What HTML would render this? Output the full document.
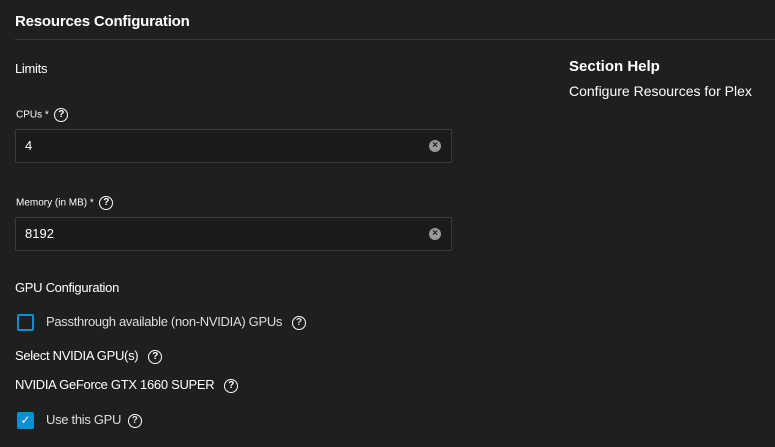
<!DOCTYPE html><html><head><style>
body{margin:0;width:775px;height:447px;background:#1f1f1f;color:#fff;font-family:"Liberation Sans",sans-serif;position:relative;overflow:hidden}
.a{position:absolute;white-space:nowrap}
.q{display:inline-block;width:12px;height:12px;border:1.8px solid #fff;border-radius:50%;font-size:10px;line-height:12px;text-align:center;font-weight:bold;vertical-align:middle;letter-spacing:0}
.in{position:absolute;left:15px;width:435px;height:32px;border:1px solid #3a3a3a;background:#1b1b1b;border-radius:2px}
.in span{position:absolute;left:9px;top:8px;font-size:13px}
.x{position:absolute;right:10px;top:10px;width:12px;height:12px;border-radius:50%;background:#9a9a9a;color:#1b1b1b;font-size:10px;line-height:12px;text-align:center;font-weight:bold}
.cb{position:absolute;width:13px;height:13px;border:2px solid #0a8fd0;border-radius:2px}
.t{font-size:13px;letter-spacing:-0.3px}
</style></head><body>
<div class="a" style="left:15px;top:13px;font-size:15px;font-weight:bold;letter-spacing:-0.2px">Resources Configuration</div>
<div class="a" style="left:15px;top:39px;width:760px;height:1px;background:#3a3a3a"></div>
<div class="a t" style="left:15px;top:61px">Limits</div>
<div class="a" style="left:16px;top:108px;font-size:10px">CPUs * &nbsp;<span class="q">?</span></div>
<div class="in" style="top:129px"><span>4</span><div class="x">×</div></div>
<div class="a" style="left:16px;top:196px;font-size:10px">Memory (in MB) * &nbsp;<span class="q">?</span></div>
<div class="in" style="top:217px"><span>8192</span><div class="x">×</div></div>
<div class="a t" style="left:15px;top:280px">GPU Configuration</div>
<div class="cb" style="left:17px;top:314px"></div>
<div class="a t" style="left:46px;top:314px;color:#ddd">Passthrough available (non-NVIDIA) GPUs &nbsp;&nbsp;<span class="q">?</span></div>
<div class="a t" style="left:15px;top:348px">Select NVIDIA GPU(s) &nbsp;&nbsp;<span class="q">?</span></div>
<div class="a t" style="left:15px;top:377px">NVIDIA GeForce GTX 1660 SUPER &nbsp;&nbsp;<span class="q">?</span></div>
<div class="cb" style="left:17px;top:412px;background:#0a8fd0;color:#fff;font-size:12px;line-height:13px;text-align:center">✓</div>
<div class="a t" style="left:46px;top:412px;color:#ddd">Use this GPU &nbsp;<span class="q">?</span></div>
<div class="a" style="left:569px;top:58px;font-size:15px;font-weight:bold">Section Help</div>
<div class="a" style="left:569px;top:83px;font-size:14px">Configure Resources for Plex</div>
</body></html>
